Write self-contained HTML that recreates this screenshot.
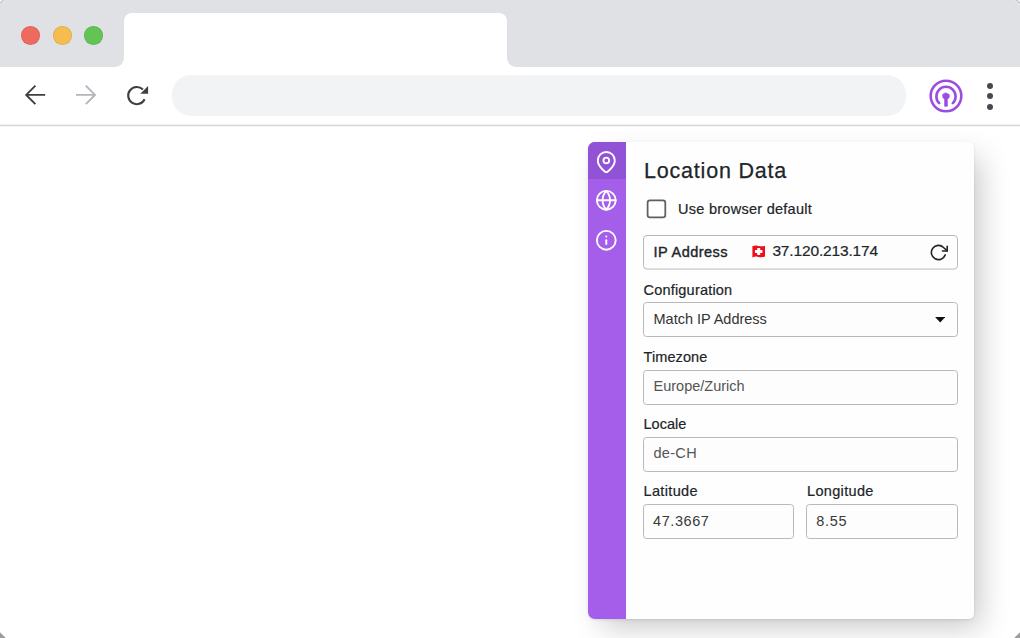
<!DOCTYPE html>
<html>
<head>
<meta charset="utf-8">
<style>
*{box-sizing:border-box;margin:0;padding:0}
html,body{width:1020px;height:638px;overflow:hidden;background:#fff;font-family:"Liberation Sans",sans-serif;color:#212529}
.abs{position:absolute}
#tabbar{left:0;top:0;width:1020px;height:66.7px;background:#dfe1e5}
#tab{left:123.8px;top:12.6px;width:383px;height:55px;background:#fff;border-radius:8px 8px 0 0}
.inv{width:9px;height:9px;top:57.7px;background:#fff}
.inv i{display:block;width:9px;height:9px;background:#dfe1e5}
#toolbar{left:0;top:66.7px;width:1020px;height:60.3px;background:linear-gradient(#fff,#fff) 0 0/100% 57.3px no-repeat,linear-gradient(#f0f0f0,#f0f0f0) 0 57.3px/100% 1px no-repeat,linear-gradient(#d8d8d8,#d8d8d8) 0 58.3px/100% 1px no-repeat,linear-gradient(#f6f6f6,#f6f6f6) 0 59.3px/100% 1px no-repeat}
.dot{width:19px;height:19px;border-radius:50%;top:25.6px;box-shadow:inset 0 0 0 .6px rgba(0,0,0,.13)}
#url{left:172px;top:75px;width:733.5px;height:40.6px;border-radius:19px;background:#f1f3f4}
#popup{left:588px;top:142px;width:386px;height:477px;background:#fefefe;border-radius:7px 5px 5px 7px;box-shadow:10px 12px 30px -4px rgba(0,0,0,.22),0 1px 3px rgba(0,0,0,.10)}
#side{left:0;top:0;width:38px;height:477px;background:#a55eea;border-radius:7px 0 0 7px;overflow:hidden}
#side .act{left:0;top:0;width:38px;height:36.8px;background:#9152d5}
.lbl{font-size:14.5px;line-height:16px;white-space:nowrap;color:#212529;-webkit-text-stroke:.2px #212529}
.box{border:1px solid #b9b9b9;border-radius:3.5px;background:#fdfdfd;height:34px}
.val{font-size:14.5px;line-height:16px;white-space:nowrap;color:#555}
</style>
</head>
<body>
<div id="tabbar" class="abs"></div>
<div id="tab" class="abs"></div>
<div class="abs inv" style="left:114.8px"><i style="border-radius:0 0 9px 0"></i></div>
<div class="abs inv" style="left:506.8px"><i style="border-radius:0 0 0 9px"></i></div>
<div class="abs dot" style="left:20.8px;background:#ee6a5f"></div>
<div class="abs dot" style="left:53px;background:#f5bd4f"></div>
<div class="abs dot" style="left:84.3px;background:#61c454"></div>
<div id="toolbar" class="abs"></div>
<div id="url" class="abs"></div>

<!-- nav icons -->
<svg class="abs" style="left:20px;top:83px" width="30" height="24" viewBox="0 0 30 24" fill="none" stroke="#3c4043" stroke-width="1.9"><path d="M25.2 11.9H6.4M15.4 2.7L6.2 11.9L15.4 21.1"/></svg>
<svg class="abs" style="left:72px;top:83px" width="30" height="24" viewBox="0 0 30 24" fill="none" stroke="#b3b6ba" stroke-width="1.9"><path d="M4 11.9H22.8M13.8 2.7L23 11.9L13.8 21.1"/></svg>
<svg class="abs" style="left:124px;top:83px" width="26" height="26" viewBox="0 0 26 26" fill="none" stroke="#3c4043" stroke-width="2.1"><path d="M18.9 6.5A8.6 8.6 0 1 0 20.6 16.2"/><path d="M24.1 3V10.8H16.3Z" fill="#3c4043" stroke="none"/></svg>

<!-- extension icon -->
<svg class="abs" style="left:928px;top:78.45px" width="36" height="36" viewBox="0 0 36 36" fill="none" stroke="#9b4de0" stroke-width="2.6" stroke-linecap="round"><circle cx="18" cy="18" r="15.3"/><path d="M11.2 25.2A9.6 9.6 0 1 1 24.8 25.2"/><path d="M18 15L21.2 16.6V19.2L19.3 21.5V28.2H16.7V21.5L14.8 19.2V16.6Z" fill="#9b4de0" stroke="#9b4de0" stroke-width=".8" stroke-linejoin="round"/></svg>
<!-- menu dots -->
<div class="abs" style="left:986.6px;top:82.8px;width:6.2px;height:6.2px;border-radius:50%;background:#46494d"></div>
<div class="abs" style="left:986.6px;top:93.3px;width:6.2px;height:6.2px;border-radius:50%;background:#46494d"></div>
<div class="abs" style="left:986.6px;top:103.8px;width:6.2px;height:6.2px;border-radius:50%;background:#46494d"></div>

<div id="popup" class="abs">
  <div id="side" class="abs">
    <div class="act abs"></div>
    <svg class="abs" style="left:7.1px;top:8.6px" width="22.6" height="22.6" viewBox="0 0 24 24" fill="none" stroke="#fff" stroke-width="2" stroke-linecap="round" stroke-linejoin="round"><path d="M21 10c0 7-9 13-9 13s-9-6-9-13a9 9 0 0 1 18 0z"/><circle cx="12" cy="10" r="3"/></svg>
    <svg class="abs" style="left:7.4px;top:47.1px" width="22.6" height="22.6" viewBox="0 0 24 24" fill="none" stroke="#fff" stroke-width="2" stroke-linecap="round" stroke-linejoin="round"><circle cx="12" cy="12" r="10"/><line x1="2" y1="12" x2="22" y2="12"/><path d="M12 2a15.3 15.3 0 0 1 4 10 15.3 15.3 0 0 1-4 10 15.3 15.3 0 0 1-4-10 15.3 15.3 0 0 1 4-10z"/></svg>
    <svg class="abs" style="left:7.0px;top:86.9px" width="22.6" height="22.6" viewBox="0 0 24 24" fill="none" stroke="#fff" stroke-width="2" stroke-linecap="round" stroke-linejoin="round"><circle cx="12" cy="12" r="10"/><line x1="12" y1="16" x2="12" y2="12"/><line x1="12" y1="8" x2="12.01" y2="8"/></svg>
  </div>
</div>

<!-- popup content, absolutely placed in page coords -->
<div class="abs" id="title" style="left:644px;top:158.2px;font-size:21.5px;line-height:26px;letter-spacing:.8px;white-space:nowrap;color:#212529;-webkit-text-stroke:.25px #212529">Location Data</div>

<svg class="abs" style="left:640px;top:192px" width="34" height="34" viewBox="0 0 34 34"><rect x="7.6" y="8.25" width="17.7" height="17.1" rx="2.4" fill="#fff" stroke="#606060" stroke-width="1.75"/></svg>
<div class="abs lbl" id="ubd" style="left:678px;top:200.6px;font-size:14.5px;letter-spacing:.27px">Use browser default</div>

<svg class="abs" style="left:640px;top:230px" width="322" height="44" viewBox="0 0 322 44"><rect x="3.5" y="5.5" width="314" height="33.6" rx="3.5" fill="#fdfdfd" stroke="#b9b9b9" stroke-width="1"/></svg>
<div class="abs" id="ipl" style="left:653.5px;top:243.6px;font-size:14.5px;line-height:16px;letter-spacing:.45px;-webkit-text-stroke:.38px #212529;white-space:nowrap;color:#212529">IP Address</div>
<svg class="abs" style="left:752px;top:245.3px" width="14" height="13.5" viewBox="0 0 14 13.5"><path d="M0.4 1.2Q3.4 -0.1 6.7 0.9T13 0.7V11.4Q10 12.9 6.7 11.9T0.4 12.5Z" fill="#ee0f18"/><path d="M5.2 2.9H8.2V5H10.4V8H8.2V10.1H5.2V8H3V5H5.2Z" fill="#fff"/></svg>
<div class="abs" id="ipv" style="left:772.4px;top:243.4px;font-size:15.5px;line-height:16px;letter-spacing:-.15px;-webkit-text-stroke:.2px #212529;white-space:nowrap;color:#212529">37.120.213.174</div>
<svg class="abs" style="left:929.2px;top:242.7px" width="19" height="19" viewBox="0 0 24 24" fill="none" stroke="#212529" stroke-width="2" stroke-linecap="round" stroke-linejoin="round"><polyline points="23 4 23 10 17 10"/><path d="M20.49 15a9 9 0 1 1-2.12-9.36L23 10"/></svg>

<div class="abs lbl" id="l1" style="left:643.5px;top:281.6px;letter-spacing:.2px">Configuration</div>
<div class="abs box" style="left:643px;top:302px;width:315px;height:35px"></div>
<div class="abs val" id="v1" style="left:653.5px;top:311px;color:#333">Match IP Address</div>
<svg class="abs" style="left:935px;top:317px" width="10.4" height="5.5" viewBox="0 0 11 6"><path d="M0 0H11L5.5 6Z" fill="#111"/></svg>

<div class="abs lbl" id="l2" style="left:643.5px;top:348.8px;letter-spacing:.1px">Timezone</div>
<div class="abs box" style="left:643px;top:370px;width:315px;height:35px"></div>
<div class="abs val" id="v2" style="left:653.5px;top:378.3px">Europe/Zurich</div>

<div class="abs lbl" id="l3" style="left:643.5px;top:415.5px">Locale</div>
<div class="abs box" style="left:643px;top:437px;width:315px;height:35px"></div>
<div class="abs val" id="v3" style="left:653.5px;top:445.3px;letter-spacing:.3px">de-CH</div>

<div class="abs lbl" id="l4" style="left:643.5px;top:482.8px;letter-spacing:.35px">Latitude</div>
<div class="abs box" style="left:643px;top:504px;width:151px;height:35px"></div>
<div class="abs val" id="v4" style="left:653.1px;top:512.5px;color:#3a3a3a;letter-spacing:.55px">47.3667</div>

<div class="abs lbl" id="l5" style="left:807px;top:482.8px;letter-spacing:.33px">Longitude</div>
<div class="abs box" style="left:806px;top:504px;width:152px;height:35px"></div>
<div class="abs val" id="v5" style="left:816.3px;top:512.5px;color:#3a3a3a;letter-spacing:.7px">8.55</div>

<!-- window corner artifacts -->
<svg class="abs" style="left:0;top:0" width="8" height="8"><path d="M0 0H5.5L0 5.5Z" fill="#eceef0"/><path d="M0 3.6L3.6 0" stroke="#bfc1c5" stroke-width="1.1"/></svg>
<svg class="abs" style="left:1012px;top:0" width="8" height="8"><path d="M8 0H2.5L8 5.5Z" fill="#eceef0"/><path d="M8 3.6L4.4 0" stroke="#bfc1c5" stroke-width="1.1"/></svg>
<svg class="abs" style="left:1012px;top:630px" width="8" height="8"><path d="M8 8V2.2L2.2 8Z" fill="#9c9c9c"/></svg>
<svg class="abs" style="left:0;top:630px" width="8" height="8"><path d="M0 8V2.2L5.8 8Z" fill="#9c9c9c"/></svg>
</body>
</html>
